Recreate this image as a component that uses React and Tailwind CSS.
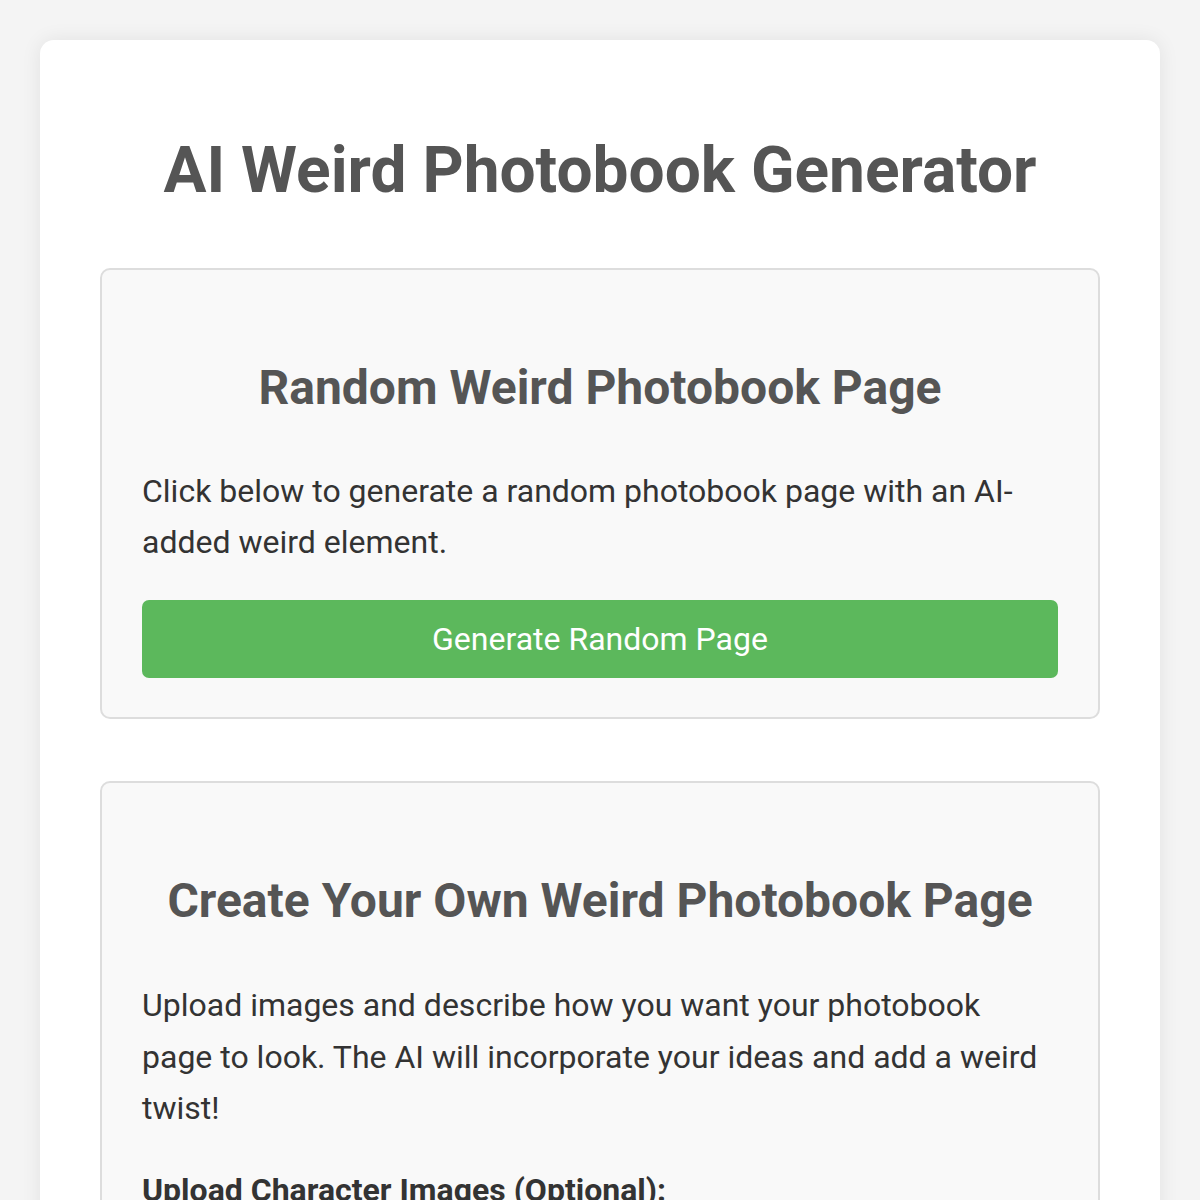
import React from 'react'

const Section = ({ title, children, className = '' }) => (
    <section className={`border-2 border-[#dddddd] bg-[#f9f9f9] rounded-[10px] px-[40px] pt-[90px] pb-[39px] ${className}`}>
        <h2 className="text-center text-[48px] leading-[56px] font-bold text-[#555555]">{title}</h2>
        {children}
    </section>
)

export default function App() {
    return (
        <div className="min-h-screen bg-[#f4f4f4] p-[40px] font-['Roboto',sans-serif]">
            <div className="bg-white rounded-[14px] shadow-[0_0_20px_rgba(0,0,0,0.08)] px-[60px] pt-[92px] pb-[60px]">
                <h1 className="text-center text-[64px] leading-[77px] font-bold text-[#555555]">
                    AI Weird Photobook Generator
                </h1>

                {/* Random page */}
                <Section title="Random Weird Photobook Page" className="mt-[59px]">
                    <p className="mt-[50px] text-[32px] leading-[51.2px] text-[#333333]">
                        Click below to generate a random photobook page with an AI-added weird element.
                    </p>
                    <button className="mt-[32px] w-full h-[78px] rounded-[7px] bg-[#5cb85c] text-white text-[32px]">
                        Generate Random Page
                    </button>
                </Section>

                {/* Custom page */}
                <Section title="Create Your Own Weird Photobook Page" className="mt-[62px]">
                    <p className="mt-[51px] text-[32px] leading-[51.2px] text-[#333333]">
                        Upload images and describe how you want your photobook page to look. The AI will incorporate your ideas and add a weird twist!
                    </p>
                    <label className="block mt-[31px] text-[32px] leading-[51.2px] font-bold text-[#333333]">
                        Upload Character Images (Optional):
                    </label>
                    <input type="file" multiple className="mt-[10px] text-[28px] text-[#333333]" />
                    <label className="block mt-[32px] text-[32px] leading-[51.2px] font-bold text-[#333333]">
                        Describe Your Page:
                    </label>
                    <textarea
                        rows={4}
                        className="mt-[10px] w-full border-2 border-[#cccccc] rounded-[7px] p-[14px] text-[32px] bg-white"
                    />
                    <button className="mt-[30px] w-full h-[78px] rounded-[7px] bg-[#5cb85c] text-white text-[32px]">
                        Generate Custom Page
                    </button>
                </Section>
            </div>
        </div>
    )
}
